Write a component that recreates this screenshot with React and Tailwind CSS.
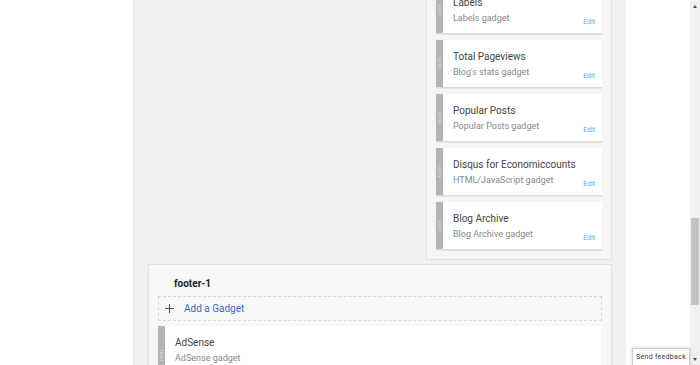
import React from "react";

const gadgets = [
  { title: "Labels", type: "Labels gadget" },
  { title: "Total Pageviews", type: "Blog's stats gadget" },
  { title: "Popular Posts", type: "Popular Posts gadget" },
  { title: "Disqus for Economiccounts", type: "HTML/JavaScript gadget" },
  { title: "Blog Archive", type: "Blog Archive gadget" },
];

function Handle() {
  return (
    <div className="w-[7px] shrink-0 bg-[#b4b4b4] flex items-center justify-center">
      <div className="flex flex-col gap-[1px]">
        {[0, 1, 2, 3, 4, 5].map((i) => (
          <div key={i} className="w-[3px] h-[1px] bg-[#d0d0d0]" />
        ))}
      </div>
    </div>
  );
}

function GadgetCard({ title, type, className = "" }) {
  return (
    <div
      className={
        "flex h-[48px] bg-white border-b border-[#d9d9d9] shadow-[0_1px_1px_rgba(0,0,0,0.06)] " +
        className
      }
    >
      <Handle />
      <div className="flex-1 relative pl-[10px] pt-[10px]">
        <div className="text-[10px] leading-[14px] text-[#444]">{title}</div>
        <div className="text-[9px] leading-[14px] mt-[1px] text-[#888]">{type}</div>
        <div className="absolute right-[7px] bottom-[7px] text-[7px] leading-[8px] text-[#7f9ccf]">
          Edit
        </div>
      </div>
    </div>
  );
}

export default function App() {
  return (
    <div
      className="h-[365px] w-[700px] overflow-hidden flex bg-white"
      style={{ fontFamily: "Roboto, 'Liberation Sans', Arial, sans-serif" }}
    >
      <div className="w-[133px] shrink-0 bg-white" />

      {/* layout editor area */}
      <div className="w-[493px] shrink-0 bg-[#f1f1f1] border-l border-[#e8e8e8]">
        <div className="ml-[292px] w-[186px] -mt-[25px] bg-[#f5f5f5] border border-[#e2e2e2] px-[9px] pt-[10px] pb-[9px] flex flex-col gap-[6px]">
          {gadgets.map((g) => (
            <GadgetCard key={g.title} title={g.title} type={g.type} />
          ))}
        </div>

        <div className="mt-[4px] ml-[14px] w-[464px] bg-[#f7f7f7] border border-[#e2e2e2] px-[9px] pt-[12px]">
          <div className="pl-[16px] text-[10px] leading-[14px] font-bold text-[#222]">footer-1</div>
          <div className="mt-[5px] h-[25px] border border-dashed border-[#d6d6d6] flex items-center pl-[6px] gap-[10px]">
            <svg width="9" height="9" viewBox="0 0 9 9">
              <path d="M4.5 0v9M0 4.5h9" stroke="#555" strokeWidth="1" />
            </svg>
            <span className="text-[10px] text-[#3b6bc6]">Add a Gadget</span>
          </div>
          <GadgetCard title="AdSense" type="AdSense gadget" className="mt-[5px] h-[60px]" />
        </div>
      </div>

      <div className="w-[64px] shrink-0 bg-white relative">
        <div className="absolute left-[6px] top-[348px] w-[58px] h-[18px] bg-white border border-[#cfcfcf] shadow-[0_0_3px_rgba(0,0,0,0.2)] flex items-center justify-center text-[7px] tracking-[0.3px] text-[#333]">
          Send feedback
        </div>
      </div>

      {/* scrollbar */}
      <div className="w-[10px] shrink-0 bg-[#f1f1f1] flex flex-col items-center">
        <div className="h-[12px] flex items-center">
          <div className="w-0 h-0 border-l-[2px] border-r-[2px] border-b-[3px] border-l-transparent border-r-transparent border-b-[#505050]" />
        </div>
        <div className="mt-[206px] w-[8px] h-[87px] bg-[#c1c1c1]" />
        <div className="mt-[48px] h-[12px] flex items-center">
          <div className="w-0 h-0 border-l-[2px] border-r-[2px] border-t-[3px] border-l-transparent border-r-transparent border-t-[#505050]" />
        </div>
      </div>
    </div>
  );
}
